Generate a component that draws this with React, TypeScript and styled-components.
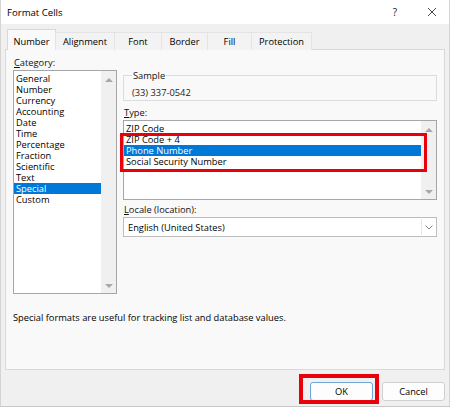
import React from "react";
import styled, { createGlobalStyle } from "styled-components";

const GlobalStyle = createGlobalStyle`
  html, body { margin: 0; padding: 0; background: #f0f0f0; }
  body {
    font-family: "Open Sans", "Noto Sans", sans-serif;
    font-size: 9.3px;
    line-height: 11px;
    color: #111;
  }
  * { box-sizing: border-box; }
`;

const Window = styled.div`
  width: 450px;
  height: 407px;
  display: flex;
  flex-direction: column;
  background: #f0f0f0;
  border-left: 1px solid #d4d4d4;
  border-right: 1px solid #d4d4d4;
  border-bottom: 1px solid #c8c8c8;
  overflow: hidden;
`;

const TitleBar = styled.div`
  height: 24px;
  flex: none;
  display: flex;
  align-items: center;
  background: #fff;
  padding-left: 6px;
`;

const Title = styled.div`
  flex: 1;
  font-size: 9.6px;
  color: #000;
`;

const TitleButton = styled.div<{ $w: number }>`
  width: ${(p) => p.$w}px;
  height: 24px;
  display: flex;
  align-items: center;
  justify-content: center;
  font-size: 10px;
  color: #222;
`;

const Body = styled.div`
  flex: 1;
  display: flex;
  flex-direction: column;
  padding: 5px 4px 0 4px;
`;

const TabStrip = styled.div`
  display: flex;
  align-items: flex-end;
  height: 21px;
  margin-left: 2px;
  margin-bottom: -1px;
  position: relative;
  z-index: 1;
`;

const Tab = styled.div<{ $w: number; $active?: boolean }>`
  width: ${(p) => p.$w}px;
  height: ${(p) => (p.$active ? 21 : 18)}px;
  padding-top: ${(p) => (p.$active ? 6 : 3)}px;
  margin-left: -1px;
  text-align: center;
  background: ${(p) => (p.$active ? "#f9f9f9" : "#f3f3f3")};
  border: 1px solid ${(p) => (p.$active ? "#d9d9d9" : "#e4e4e4")};
  border-bottom: none;
  color: #000;
  &:first-child { margin-left: 0; }
`;

const Panel = styled.div`
  height: 321px;
  background: #f9f9f9;
  border: 1px solid #d9d9d9;
  padding: 7px 5px 0 7px;
  display: flex;
  flex-direction: column;
`;

const Columns = styled.div`
  display: grid;
  grid-template-columns: 104px 314px;
  column-gap: 6px;
`;

const Column = styled.div`
  display: flex;
  flex-direction: column;
`;

const Label = styled.div<{ $top?: number }>`
  height: 11px;
  margin-top: ${(p) => p.$top ?? 0}px;
  margin-bottom: 2px;
  padding-left: 1px;
  color: #111;
  white-space: nowrap;
  u { text-decoration-thickness: 1px; text-underline-offset: 1px; }
`;

const ListWrap = styled.div`
  position: relative;
`;

const ListBox = styled.div<{ $h: number }>`
  height: ${(p) => p.$h}px;
  border: 1px solid #a6a6a6;
  background: #fff;
  display: flex;
`;

const ListItems = styled.div`
  flex: 1;
  padding-top: 2px;
`;

const Item = styled.div<{ $selected?: boolean }>`
  height: 11px;
  line-height: 11px;
  padding-left: 2px;
  white-space: nowrap;
  background: ${(p) => (p.$selected ? "#0078d7" : "transparent")};
  color: ${(p) => (p.$selected ? "#fff" : "#000")};
`;

const ScrollTrack = styled.div`
  width: 15px;
  background: #f0f0f0;
  display: flex;
  flex-direction: column;
  justify-content: space-between;
  align-items: center;
  padding: 7px 0 5px;
`;

const Arrow = styled.div<{ $down?: boolean }>`
  width: 0;
  height: 0;
  border-left: 4px solid transparent;
  border-right: 4px solid transparent;
  ${(p) =>
    p.$down
      ? "border-top: 4px solid #a8a8a8;"
      : "border-bottom: 4px solid #a8a8a8;"}
`;

const Annotation = styled.span<{ $t: number; $l: number; $w: number; $h: number; $b: number }>`
  position: absolute;
  top: ${(p) => p.$t}px;
  left: ${(p) => p.$l}px;
  width: ${(p) => p.$w}px;
  height: ${(p) => p.$h}px;
  border: ${(p) => p.$b}px solid #e8000b;
  pointer-events: none;
`;

const SampleGroup = styled.fieldset`
  margin: 13px 0 0 0;
  padding: 6px 8px 2px 8px;
  border: 1px solid #dcdcdc;
  min-width: 0;
`;

const Legend = styled.legend`
  padding: 0 1px;
  line-height: 11px;
  color: #111;
`;

const SampleValue = styled.div`
  height: 11px;
  color: #222;
`;

const Combo = styled.div`
  height: 20px;
  display: flex;
  align-items: stretch;
  background: #fff;
  border: 1px solid #bdbdbd;
`;

const ComboText = styled.div`
  flex: 1;
  padding-left: 4px;
  display: flex;
  align-items: center;
  color: #000;
`;

const ComboButton = styled.div`
  width: 14px;
  margin: 1px;
  display: flex;
  align-items: center;
  justify-content: center;
  border-left: 1px solid #e6e6e6;
`;

const Description = styled.div`
  margin-top: 18px;
  color: #000;
`;

const Footer = styled.div`
  display: flex;
  justify-content: flex-end;
  gap: 9px;
  padding: 12px 0 0 0;
`;

const ButtonWrap = styled.div`
  position: relative;
`;

const Button = styled.div<{ $w: number; $default?: boolean }>`
  width: ${(p) => p.$w}px;
  height: 19px;
  display: flex;
  align-items: center;
  justify-content: center;
  background: #fdfdfd;
  border: 1px solid ${(p) => (p.$default ? "#6fa6d6" : "#d0d0d0")};
  border-radius: 3px;
  color: #000;
`;

const categories = [
  "General",
  "Number",
  "Currency",
  "Accounting",
  "Date",
  "Time",
  "Percentage",
  "Fraction",
  "Scientific",
  "Text",
  "Special",
  "Custom",
];

const types = ["ZIP Code", "ZIP Code + 4", "Phone Number", "Social Security Number"];

const tabs: [string, number][] = [
  ["Number", 49],
  ["Alignment", 60],
  ["Font", 48],
  ["Border", 47],
  ["Fill", 45],
  ["Protection", 61],
];

export default function App() {
  return (
    <>
      <GlobalStyle />
      <Window>
        <TitleBar>
          <Title>Format Cells</Title>
          <TitleButton $w={40}>?</TitleButton>
          <TitleButton $w={34}>
            <svg width="10" height="10" viewBox="0 0 10 10">
              <path d="M1 1 L9 9 M9 1 L1 9" stroke="#333" strokeWidth="0.9" fill="none" />
            </svg>
          </TitleButton>
        </TitleBar>
        <Body>
          <TabStrip>
            {tabs.map(([name, w], i) => (
              <Tab key={name} $w={w} $active={i === 0}>
                {name}
              </Tab>
            ))}
          </TabStrip>
          <Panel>
            <Columns>
              <Column>
                <Label>
                  <u>C</u>ategory:
                </Label>
                <ListBox $h={224}>
                  <ListItems>
                    {categories.map((c) => (
                      <Item key={c} $selected={c === "Special"}>
                        {c}
                      </Item>
                    ))}
                  </ListItems>
                  <ScrollTrack>
                    <Arrow />
                    <Arrow $down />
                  </ScrollTrack>
                </ListBox>
              </Column>
              <Column>
                <SampleGroup>
                  <Legend>Sample</Legend>
                  <SampleValue>(33) 337-0542</SampleValue>
                </SampleGroup>
                <Label $top={6}>
                  <u>T</u>ype:
                </Label>
                <ListWrap>
                  <ListBox $h={80}>
                    <ListItems>
                      {types.map((t) => (
                        <Item key={t} $selected={t === "Phone Number"}>
                          {t}
                        </Item>
                      ))}
                    </ListItems>
                    <ScrollTrack>
                      <Arrow />
                      <Arrow $down />
                    </ScrollTrack>
                  </ListBox>
                  <Annotation $t={13} $l={-3} $w={307} $h={39} $b={3} />
                </ListWrap>
                <Label $top={4}>
                  <u>L</u>ocale (location):
                </Label>
                <Combo>
                  <ComboText>English (United States)</ComboText>
                  <ComboButton>
                    <svg width="8" height="5" viewBox="0 0 8 5">
                      <path d="M0.5 0.5 L4 4 L7.5 0.5" stroke="#666" strokeWidth="0.8" fill="none" />
                    </svg>
                  </ComboButton>
                </Combo>
              </Column>
            </Columns>
            <Description>Special formats are useful for tracking list and database values.</Description>
          </Panel>
          <Footer>
            <ButtonWrap>
              <Button $w={63} $default>
                OK
              </Button>
              <Annotation $t={-8} $l={-11} $w={80} $h={30} $b={4} />
            </ButtonWrap>
            <Button $w={63}>Cancel</Button>
          </Footer>
        </Body>
      </Window>
    </>
  );
}
